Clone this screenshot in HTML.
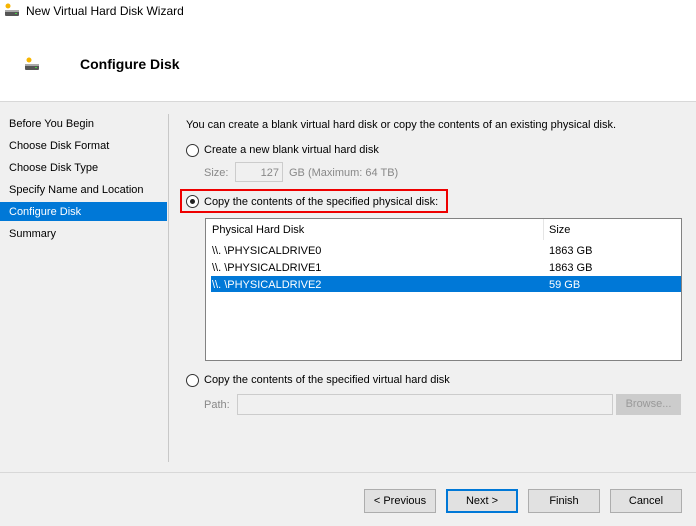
<!DOCTYPE html><html><head><style>
body{margin:0;width:696px;height:526px;background:#f0f0f0;font-family:"Liberation Sans",sans-serif;font-size:11px;color:#000;position:relative;overflow:hidden}
.a{position:absolute;white-space:nowrap}
.radio{position:absolute;width:11px;height:11px;border:1px solid #333;border-radius:50%;background:#fff}
.radio.on::after{content:"";position:absolute;left:3px;top:3px;width:5px;height:5px;border-radius:50%;background:#222}
.btn{position:absolute;top:489px;height:22px;width:70px;border:1px solid #adadad;background:#e1e1e1;text-align:center;line-height:22px}
.nav{position:absolute;left:9px}
</style></head><body>
<div class="a" style="left:0;top:0;width:696px;height:101px;background:#fff;border-bottom:1px solid #d8d8d8"></div>
<svg class="a" style="left:4px;top:2px" width="16" height="16"><circle cx="4" cy="4" r="2.5" fill="#f7b500"/><rect x="1" y="9" width="14" height="5" rx="1" fill="#555"/><rect x="1" y="8" width="14" height="2" fill="#aaa"/><rect x="11" y="11" width="2" height="1" fill="#4c4"/></svg>
<div class="a" style="left:26px;top:4px;font-size:12px">New Virtual Hard Disk Wizard</div>
<svg class="a" style="left:24px;top:56px" width="16" height="16"><circle cx="5" cy="4" r="2.5" fill="#f7b500"/><rect x="1" y="9" width="14" height="5" rx="1" fill="#555"/><rect x="1" y="8" width="14" height="2" fill="#aaa"/><rect x="11" y="11" width="2" height="1" fill="#4c4"/></svg>
<div class="a" style="left:80px;top:56px;font-size:14px;font-weight:bold">Configure Disk</div>
<div class="a" style="left:168px;top:114px;width:1px;height:348px;background:#c8c8c8"></div>
<div class="nav a" style="top:118px">Before You Begin</div>
<div class="nav a" style="top:140px">Choose Disk Format</div>
<div class="nav a" style="top:162px">Choose Disk Type</div>
<div class="nav a" style="top:184px">Specify Name and Location</div>
<div class="a" style="left:0;top:202px;width:167px;height:19px;background:#0078d7"></div>
<div class="nav a" style="top:206px;color:#fff">Configure Disk</div>
<div class="nav a" style="top:228px">Summary</div>
<div class="a" style="left:186px;top:119px">You can create a blank virtual hard disk or copy the contents of an existing physical disk.</div>
<div class="radio" style="left:186px;top:144px"></div>
<div class="a" style="left:204px;top:144px">Create a new blank virtual hard disk</div>
<div class="a" style="left:204px;top:167px;color:#888">Size:</div>
<div class="a" style="left:235px;top:162px;width:48px;height:20px;border:1px solid #ccc;background:#f0f0f0;text-align:right;color:#888;line-height:20px;box-sizing:border-box;padding-right:3px">127</div>
<div class="a" style="left:289px;top:167px;color:#888">GB (Maximum: 64 TB)</div>
<div class="a" style="left:180px;top:189px;width:264px;height:20px;border:2px solid #e00"></div>
<div class="radio on" style="left:186px;top:195px"></div>
<div class="a" style="left:204px;top:196px">Copy the contents of the specified physical disk:</div>
<div class="a" style="left:205px;top:218px;width:475px;height:141px;border:1px solid #828282;background:#fff"></div>
<div class="a" style="left:543px;top:219px;width:1px;height:21px;background:#e5e5e5"></div>
<div class="a" style="left:212px;top:224px">Physical Hard Disk</div>
<div class="a" style="left:549px;top:224px">Size</div>
<div class="a" style="left:212px;top:245px">\\. \PHYSICALDRIVE0</div><div class="a" style="left:549px;top:245px">1863 GB</div>
<div class="a" style="left:212px;top:262px">\\. \PHYSICALDRIVE1</div><div class="a" style="left:549px;top:262px">1863 GB</div>
<div class="a" style="left:211px;top:276px;width:470px;height:16px;background:#0078d7"></div>
<div class="a" style="left:212px;top:279px;color:#fff">\\. \PHYSICALDRIVE2</div><div class="a" style="left:549px;top:279px;color:#fff">59 GB</div>
<div class="radio" style="left:186px;top:374px"></div>
<div class="a" style="left:204px;top:374px">Copy the contents of the specified virtual hard disk</div>
<div class="a" style="left:204px;top:399px;color:#888">Path:</div>
<div class="a" style="left:237px;top:394px;width:374px;height:19px;border:1px solid #ccc"></div>
<div class="a" style="left:616px;top:394px;width:63px;height:19px;border:1px solid #ccc;background:#ccc;color:#999;text-align:center;line-height:19px">Browse...</div>
<div class="a" style="left:0;top:472px;width:696px;height:1px;background:#d8d8d8"></div>
<div class="btn" style="left:364px">&lt; Previous</div>
<div class="btn" style="left:446px;border:2px solid #0078d7;width:68px;height:20px;line-height:20px">Next &gt;</div>
<div class="btn" style="left:528px">Finish</div>
<div class="btn" style="left:610px">Cancel</div>
</body></html>
